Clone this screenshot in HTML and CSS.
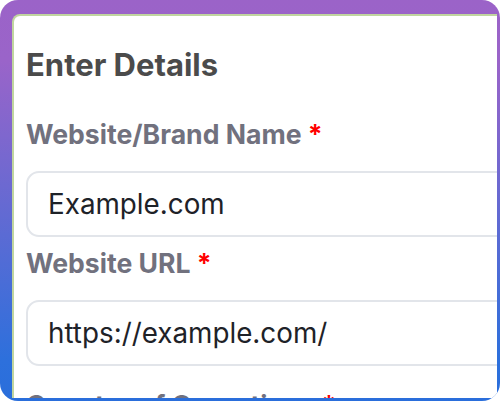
FILE: index.html
```html
<!DOCTYPE html>
<html lang="en">
<head>
<meta charset="utf-8">
<title>Enter Details</title>
<link rel="stylesheet" href="styles.css">
</head>
<body>
<div class="frame">
  <div class="card">
    <h2 class="title">Enter Details</h2>
    <div class="field">
      <label class="label" for="brand">Website/Brand Name <span class="req">*</span></label>
      <input class="input" id="brand" type="text" value="Example.com" readonly>
    </div>
    <div class="field">
      <label class="label" for="url">Website URL <span class="req">*</span></label>
      <input class="input" id="url" type="text" value="https://example.com/" readonly>
    </div>
    <div class="field field-country">
      <label class="label" for="country">Country of Operations <span class="req">*</span></label>
    </div>
  </div>
</div>
</body>
</html>
```
FILE: styles.css
```css
html, body {
  margin: 0;
  padding: 0;
  background: #ffffff;
}

.frame {
  box-sizing: border-box;
  width: 500px;
  height: 401px;
  padding: 14px 3px 3px 12px;
  border-radius: 18px;
  overflow: hidden;
  background: linear-gradient(180deg, #9b63c8 0%, #9a64c9 15%, #2d70dc 90%, #2a6edb 100%);
}

.card {
  box-sizing: border-box;
  height: 100%;
  background: #ffffff;
  border-top: 2px solid rgba(150, 185, 95, 0.6);
  border-left: 2px solid rgba(150, 185, 95, 0.6);
  border-top-left-radius: 8px;
  overflow: hidden;
  padding: 31px 0 0 12px;
  font-family: Inter, "Liberation Sans", sans-serif;
}

.title {
  margin: 0;
  font-size: 31px;
  line-height: 36px;
  font-weight: 700;
  color: #4b4b4b;
}

.field {
  display: flex;
  flex-direction: column;
  gap: 21px;
  margin-top: 10px;
}

.title + .field {
  margin-top: 35px;
}

.field-country {
  margin-top: 23px;
}

.label {
  font-size: 26.6px;
  line-height: 32px;
  font-weight: 700;
  color: #71717e;
}

.req {
  color: #ff0000;
}

.input {
  box-sizing: border-box;
  width: 620px;
  height: 66px;
  margin: 0;
  padding: 0 20px;
  border: 2px solid #e2e5ea;
  border-radius: 13px;
  background: #ffffff;
  font-family: Inter, "Liberation Sans", sans-serif;
  font-size: 27.8px;
  font-weight: 400;
  color: #1e2228;
  outline: none;
}
```
